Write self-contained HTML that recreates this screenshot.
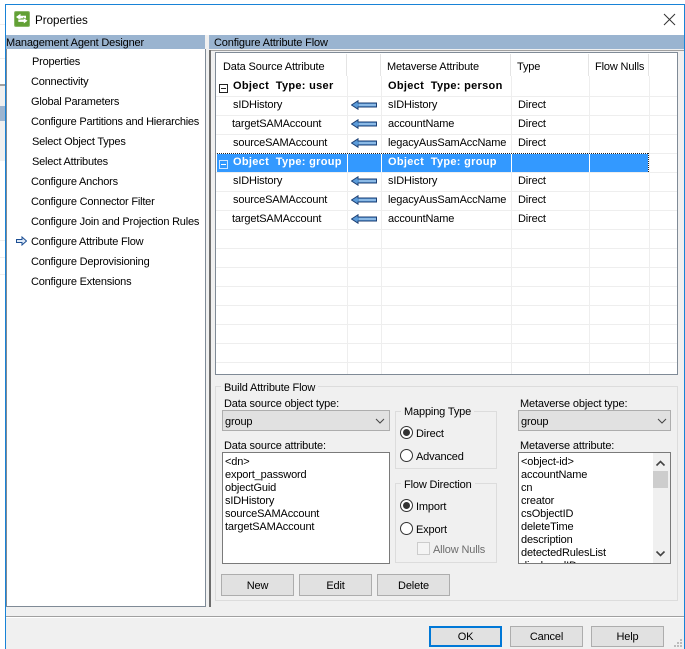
<!DOCTYPE html>
<html><head><meta charset="utf-8">
<style>
html,body{margin:0;padding:0;background:#fff}
body{width:685px;height:649px;position:relative;overflow:hidden;font-family:"Liberation Sans",sans-serif;font-size:11px;letter-spacing:-.15px;color:#000}
.a{position:absolute}
.t{position:absolute;white-space:nowrap;line-height:14px;height:14px;margin-top:1px}
.n{letter-spacing:-.21px}
.b{font-weight:bold;letter-spacing:.3px}
.w{color:#fff}
.h{position:absolute;background:#eee;height:1px}
.v{position:absolute;background:#eee;width:1px}
.btn{position:absolute;box-sizing:border-box;background:#e1e1e1;border:1px solid #adadad;text-align:center;line-height:22px;height:22px}
.sel{position:absolute;box-sizing:border-box;background:#e1e1e1;border:1px solid #adadad;height:21px;line-height:22px;padding-left:2px}
.list{position:absolute;box-sizing:border-box;background:#fff;border:1px solid #7a7a7a;overflow:hidden}
.list div{position:absolute;left:2px;line-height:13px;height:13px;white-space:nowrap;margin-top:1px}
.gb{position:absolute;box-sizing:border-box;border:1px solid #dcdcdc}
.gl{position:absolute;background:#f0f0f0;padding:1px 3px 0;line-height:14px;white-space:nowrap}
.r{position:absolute;width:13px;height:13px;box-sizing:border-box;border:1px solid #333;border-radius:50%;background:#fff}
.r.on:after{content:"";position:absolute;left:2px;top:2px;width:7px;height:7px;border-radius:50%;background:#333}
</style></head><body>

<!-- background app strip -->
<div class="a" style="left:0;top:84px;width:5px;height:2px;background:#a0a0a0"></div>
<div class="a" style="left:0;top:86px;width:5px;height:20px;background:#f0f0f0"></div>
<div class="a" style="left:0;top:106px;width:5px;height:15px;background:#9db5d0"></div>
<div class="a" style="left:0;top:121px;width:5px;height:40px;background:#f0f0f0"></div>
<div class="a" style="left:0;top:24px;width:5px;height:1px;background:#eee"></div>
<div class="a" style="left:0;top:58px;width:5px;height:1px;background:#eee"></div>
<div class="a" style="left:0;top:240px;width:5px;height:1px;background:#eee"></div>
<div class="a" style="left:0;top:257px;width:5px;height:1px;background:#eee"></div>
<div class="a" style="left:0;top:274px;width:5px;height:1px;background:#eee"></div>

<!-- window -->
<div class="a" style="left:5px;top:4px;width:680px;height:645px;box-sizing:border-box;background:#f0f0f0;border:1px solid #1883d7;border-bottom:0"></div>
<div class="a" style="left:6px;top:5px;width:678px;height:30px;background:#fff"></div>

<!-- title icon -->
<svg class="a" style="left:14px;top:11px" width="16" height="16" viewBox="0 0 16 16">
<rect x=".5" y=".5" width="15" height="15" rx="1.5" fill="#62a035" stroke="#8ab868"/>
<path d="M2 6L6.5 2.8V4.8H12V7.4H6.5V9.2Z" fill="#fff"/>
<path d="M14 9.8L9.5 6.6V8.2H4V11.2H9.5V13Z" fill="#fff" stroke="#62a035" stroke-width=".6"/>
</svg>
<div class="t" style="left:35px;top:13px;font-size:11.6px;letter-spacing:0">Properties</div>
<svg class="a" style="left:663px;top:13px" width="13" height="13" viewBox="0 0 13 13"><path d="M1 1L12 12M12 1L1 12" stroke="#333" stroke-width="1" fill="none"/></svg>

<!-- header bars -->
<div class="a" style="left:6px;top:35px;width:199px;height:14px;background:#9ab4d0"></div>
<div class="a" style="left:209px;top:35px;width:475px;height:14px;background:#9ab4d0"></div>
<div class="t" style="left:6px;top:35px;letter-spacing:-.18px">Management Agent Designer</div>
<div class="t" style="left:214px;top:35px">Configure Attribute Flow</div>

<!-- left panel -->
<div class="a" style="left:6px;top:49px;width:200px;height:558px;box-sizing:border-box;background:#fff;border:1px solid #7f8a96;border-top:0"></div>
<div class="t n" style="left:32px;top:54px">Properties</div>
<div class="t n" style="left:31px;top:74px">Connectivity</div>
<div class="t n" style="left:31px;top:94px">Global Parameters</div>
<div class="t n" style="left:31px;top:114px;letter-spacing:-.24px">Configure Partitions and Hierarchies</div>
<div class="t n" style="left:32px;top:134px">Select Object Types</div>
<div class="t n" style="left:32px;top:154px">Select Attributes</div>
<div class="t n" style="left:31px;top:174px">Configure Anchors</div>
<div class="t n" style="left:31px;top:194px">Configure Connector Filter</div>
<div class="t n" style="left:31px;top:214px">Configure Join and Projection Rules</div>
<div class="t n" style="left:31px;top:234px">Configure Attribute Flow</div>
<div class="t n" style="left:31px;top:254px">Configure Deprovisioning</div>
<div class="t n" style="left:31px;top:274px">Configure Extensions</div>
<svg class="a" style="left:16px;top:236px" width="11" height="10" viewBox="0 0 11 10"><path d="M.5 3.5H6V1L10.5 5L6 9V6.5H.5Z" fill="#dfeaf7" stroke="#1d4f94"/></svg>

<!-- splitter / right panel frame -->
<div class="a" style="left:209px;top:50px;width:2px;height:557px;background:#6d6d6d"></div>
<div class="a" style="left:211px;top:50px;width:473px;height:1px;background:#a0a0a0"></div>

<!-- grid -->
<div class="a" style="left:215px;top:52px;width:463px;height:323px;box-sizing:border-box;background:#fff;border:1px solid #7f8a96"></div>
<div class="v" style="left:346px;top:54px;height:22px;background:#e4e4e4"></div>
<div class="v" style="left:380px;top:54px;height:22px;background:#e4e4e4"></div>
<div class="v" style="left:510px;top:54px;height:22px;background:#e4e4e4"></div>
<div class="v" style="left:588px;top:54px;height:22px;background:#e4e4e4"></div>
<div class="v" style="left:648px;top:54px;height:22px;background:#e4e4e4"></div>
<!-- grid lines -->
<div class="v" style="left:347px;top:76px;height:298px"></div>
<div class="v" style="left:381px;top:76px;height:298px"></div>
<div class="v" style="left:511px;top:76px;height:298px"></div>
<div class="v" style="left:589px;top:76px;height:298px"></div>
<div class="v" style="left:649px;top:76px;height:298px"></div>
<div class="h" style="left:216px;top:96px;width:461px"></div>
<div class="h" style="left:216px;top:115px;width:461px"></div>
<div class="h" style="left:216px;top:134px;width:461px"></div>
<div class="h" style="left:216px;top:153px;width:461px"></div>
<div class="h" style="left:216px;top:172px;width:461px"></div>
<div class="h" style="left:216px;top:191px;width:461px"></div>
<div class="h" style="left:216px;top:210px;width:461px"></div>
<div class="h" style="left:216px;top:229px;width:461px"></div>
<div class="h" style="left:216px;top:248px;width:461px"></div>
<div class="h" style="left:216px;top:267px;width:461px"></div>
<div class="h" style="left:216px;top:286px;width:461px"></div>
<div class="h" style="left:216px;top:305px;width:461px"></div>
<div class="h" style="left:216px;top:324px;width:461px"></div>
<div class="h" style="left:216px;top:343px;width:461px"></div>
<div class="h" style="left:216px;top:362px;width:461px"></div>

<div class="t" style="left:223px;top:59px">Data Source Attribute</div>
<div class="t" style="left:387px;top:59px">Metaverse Attribute</div>
<div class="t" style="left:517px;top:59px">Type</div>
<div class="t" style="left:595px;top:59px">Flow Nulls</div>

<!-- selection -->
<div class="a" style="left:217px;top:154px;width:432px;height:18px;background:#3399ff"></div>
<div class="a" style="left:217px;top:153px;width:432px;height:1px;background:repeating-linear-gradient(90deg,#222 0 1px,#fff 1px 2px)"></div>
<div class="a" style="left:648px;top:153px;width:1px;height:19px;background:repeating-linear-gradient(180deg,#222 0 1px,#fff 1px 2px)"></div>
<div class="a" style="left:347px;top:154px;width:1px;height:18px;background:#fff"></div>
<div class="a" style="left:381px;top:154px;width:1px;height:18px;background:#fff"></div>
<div class="a" style="left:511px;top:154px;width:1px;height:18px;background:#fff"></div>
<div class="a" style="left:589px;top:154px;width:1px;height:18px;background:#fff"></div>

<!-- expanders -->
<svg class="a" style="left:219px;top:84px" width="9" height="9" viewBox="0 0 9 9"><rect x=".5" y=".5" width="8" height="8" fill="#fff" stroke="#222"/><path d="M2 4.5H7" stroke="#222"/></svg>
<svg class="a" style="left:219px;top:160px" width="9" height="9" viewBox="0 0 9 9"><rect x=".5" y=".5" width="8" height="8" fill="#3399ff" stroke="#cfe6ff"/><path d="M2 4.5H7" stroke="#fff"/></svg>

<div class="t b" style="left:233px;top:78px">Object&nbsp; Type: user</div>
<div class="t b" style="left:388px;top:78px">Object&nbsp; Type: person</div>
<div class="t" style="left:233px;top:97px">sIDHistory</div>
<div class="t" style="left:232px;top:116px">targetSAMAccount</div>
<div class="t" style="left:233px;top:135px">sourceSAMAccount</div>
<div class="t" style="left:388px;top:97px">sIDHistory</div>
<div class="t" style="left:388px;top:116px">accountName</div>
<div class="t" style="left:388px;top:135px">legacyAusSamAccName</div>
<div class="t" style="left:518px;top:97px">Direct</div>
<div class="t" style="left:518px;top:116px">Direct</div>
<div class="t" style="left:518px;top:135px">Direct</div>
<div class="t b w" style="left:233px;top:154px">Object&nbsp; Type: group</div>
<div class="t b w" style="left:388px;top:154px">Object&nbsp; Type: group</div>
<div class="t" style="left:233px;top:173px">sIDHistory</div>
<div class="t" style="left:233px;top:192px">sourceSAMAccount</div>
<div class="t" style="left:232px;top:211px">targetSAMAccount</div>
<div class="t" style="left:388px;top:173px">sIDHistory</div>
<div class="t" style="left:388px;top:192px">legacyAusSamAccName</div>
<div class="t" style="left:388px;top:211px">accountName</div>
<div class="t" style="left:518px;top:173px">Direct</div>
<div class="t" style="left:518px;top:192px">Direct</div>
<div class="t" style="left:518px;top:211px">Direct</div>

<!-- arrows -->
<svg class="a" style="left:351px;top:100px" width="26" height="10" viewBox="0 0 26 10"><path d="M.5 5L7 .8V3H25.5V7H7V9.2Z" fill="#5b9bd9" stroke="#1c3f73"/><path d="M8 5H25" stroke="#bcd9f2"/></svg>
<svg class="a" style="left:351px;top:119px" width="26" height="10" viewBox="0 0 26 10"><path d="M.5 5L7 .8V3H25.5V7H7V9.2Z" fill="#5b9bd9" stroke="#1c3f73"/><path d="M8 5H25" stroke="#bcd9f2"/></svg>
<svg class="a" style="left:351px;top:138px" width="26" height="10" viewBox="0 0 26 10"><path d="M.5 5L7 .8V3H25.5V7H7V9.2Z" fill="#5b9bd9" stroke="#1c3f73"/><path d="M8 5H25" stroke="#bcd9f2"/></svg>
<svg class="a" style="left:351px;top:176px" width="26" height="10" viewBox="0 0 26 10"><path d="M.5 5L7 .8V3H25.5V7H7V9.2Z" fill="#5b9bd9" stroke="#1c3f73"/><path d="M8 5H25" stroke="#bcd9f2"/></svg>
<svg class="a" style="left:351px;top:195px" width="26" height="10" viewBox="0 0 26 10"><path d="M.5 5L7 .8V3H25.5V7H7V9.2Z" fill="#5b9bd9" stroke="#1c3f73"/><path d="M8 5H25" stroke="#bcd9f2"/></svg>
<svg class="a" style="left:351px;top:214px" width="26" height="10" viewBox="0 0 26 10"><path d="M.5 5L7 .8V3H25.5V7H7V9.2Z" fill="#5b9bd9" stroke="#1c3f73"/><path d="M8 5H25" stroke="#bcd9f2"/></svg>

<!-- Build Attribute Flow -->
<div class="gb" style="left:215px;top:386px;width:463px;height:215px"></div>
<div class="gl" style="left:221px;top:380px">Build Attribute Flow</div>
<div class="t" style="left:224px;top:396px">Data source object type:</div>
<div class="sel" style="left:222px;top:410px;width:168px">group</div>
<svg class="a" style="left:375px;top:418px" width="10" height="6" viewBox="0 0 10 6"><path d="M1 1L5 5L9 1" fill="none" stroke="#444"/></svg>
<div class="t" style="left:224px;top:438px">Data source attribute:</div>
<div class="list" style="left:222px;top:452px;width:168px;height:112px">
<div style="top:2px">&lt;dn&gt;</div><div style="top:15px">export_password</div><div style="top:28px">objectGuid</div><div style="top:41px">sIDHistory</div><div style="top:54px">sourceSAMAccount</div><div style="top:67px">targetSAMAccount</div>
</div>

<div class="gb" style="left:395px;top:411px;width:102px;height:58px"></div>
<div class="gl" style="left:401px;top:404px">Mapping Type</div>
<div class="r on" style="left:400px;top:426px"></div>
<div class="t" style="left:416px;top:426px">Direct</div>
<div class="r" style="left:400px;top:449px"></div>
<div class="t" style="left:416px;top:449px">Advanced</div>

<div class="gb" style="left:395px;top:483px;width:102px;height:80px"></div>
<div class="gl" style="left:401px;top:477px">Flow Direction</div>
<div class="r on" style="left:400px;top:499px"></div>
<div class="t" style="left:416px;top:499px">Import</div>
<div class="r" style="left:400px;top:522px"></div>
<div class="t" style="left:416px;top:522px">Export</div>
<div class="a" style="left:417px;top:542px;width:13px;height:13px;box-sizing:border-box;border:1px solid #ccc;background:#f4f4f4"></div>
<div class="t" style="left:433px;top:542px;color:#6d6d6d">Allow Nulls</div>

<div class="t" style="left:520px;top:396px">Metaverse object type:</div>
<div class="sel" style="left:518px;top:410px;width:153px">group</div>
<svg class="a" style="left:657px;top:418px" width="10" height="6" viewBox="0 0 10 6"><path d="M1 1L5 5L9 1" fill="none" stroke="#444"/></svg>
<div class="t" style="left:520px;top:438px">Metaverse attribute:</div>
<div class="list" style="left:518px;top:452px;width:153px;height:112px">
<div style="top:2px">&lt;object-id&gt;</div><div style="top:15px">accountName</div><div style="top:28px">cn</div><div style="top:41px">creator</div><div style="top:54px">csObjectID</div><div style="top:67px">deleteTime</div><div style="top:80px">description</div><div style="top:93px">detectedRulesList</div><div style="top:106px">displayedID</div>
<span class="a" style="left:134px;top:0;width:17px;height:110px;background:#f0f0f0"></span>
<span class="a" style="left:134px;top:18px;width:15px;height:17px;background:#cdcdcd"></span>
</div>
<svg class="a" style="left:655px;top:460px" width="11" height="7" viewBox="0 0 11 7"><path d="M1.5 5.5L5.5 1.5L9.5 5.5" fill="none" stroke="#444" stroke-width="1.6"/></svg>
<svg class="a" style="left:655px;top:550px" width="11" height="7" viewBox="0 0 11 7"><path d="M1.5 1.5L5.5 5.5L9.5 1.5" fill="none" stroke="#444" stroke-width="1.6"/></svg>

<div class="btn" style="left:221px;top:574px;width:73px">New</div>
<div class="btn" style="left:299px;top:574px;width:73px">Edit</div>
<div class="btn" style="left:377px;top:574px;width:73px">Delete</div>

<!-- footer -->
<div class="a" style="left:6px;top:616px;width:678px;height:1px;background:#a0a0a0"></div>
<div class="a" style="left:6px;top:617px;width:678px;height:1px;background:#fff"></div>
<div class="btn" style="left:429px;top:626px;width:73px;height:21px;border:2px solid #0078d7;line-height:19px">OK</div>
<div class="btn" style="left:510px;top:626px;width:73px;height:21px;line-height:21px">Cancel</div>
<div class="btn" style="left:591px;top:626px;width:73px;height:21px;line-height:21px">Help</div>
<!-- size grip -->
<svg class="a" style="left:673px;top:638px" width="10" height="10" viewBox="0 0 10 10"><path d="M7 1h2v2H7zM4 4h2v2H4zM7 4h2v2H7zM1 7h2v2H1zM4 7h2v2H4zM7 7h2v2H7z" fill="#bcbcbc"/></svg>
</body></html>
